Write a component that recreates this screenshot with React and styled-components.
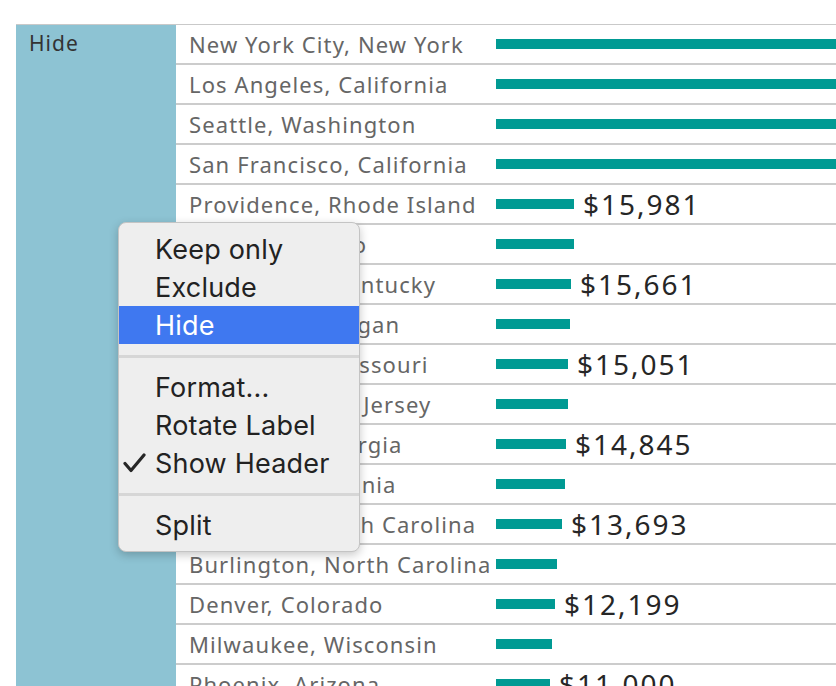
import React from "react";
import styled, { createGlobalStyle } from "styled-components";

const GlobalStyle = createGlobalStyle`
  html, body {
    margin: 0;
    padding: 0;
    background: #ffffff;
  }
`;

const rows = [
  { city: "New York City, New York", bar: 400 },
  { city: "Los Angeles, California", bar: 400 },
  { city: "Seattle, Washington", bar: 400 },
  { city: "San Francisco, California", bar: 400 },
  { city: "Providence, Rhode Island", bar: 78, value: "$15,981" },
  { city: "Cleveland, Ohio", bar: 78 },
  { city: "Owensboro, Kentucky", bar: 75, value: "$15,661" },
  { city: "Saginaw, Michigan", bar: 74 },
  { city: "Kansas City, Missouri", bar: 72, value: "$15,051" },
  { city: "Montclair, New Jersey", bar: 72 },
  { city: "Savannah, Georgia", bar: 70, value: "$14,845" },
  { city: "Arlington, Virginia", bar: 69 },
  { city: "Charlotte, North Carolina", bar: 66, value: "$13,693" },
  { city: "Burlington, North Carolina", bar: 61 },
  { city: "Denver, Colorado", bar: 59, value: "$12,199" },
  { city: "Milwaukee, Wisconsin", bar: 56 },
  { city: "Phoenix, Arizona", bar: 54, value: "$11,000" },
];

const menu = [
  { label: "Keep only" },
  { label: "Exclude" },
  { label: "Hide", active: true },
  { sep: true },
  { label: "Format..." },
  { label: "Rotate Label" },
  { label: "Show Header", checked: true },
  { sep: true },
  { label: "Split" },
];

export default function App() {
  return (
    <Page>
      <GlobalStyle />
      <Table>
        <HeaderCell>Hide</HeaderCell>
        <Rows>
          {rows.map((r) => (
            <Row key={r.city}>
              <Label>{r.city}</Label>
              <BarCell>
                <Bar style={{ width: r.bar }} />
                {r.value && <Value>{r.value}</Value>}
              </BarCell>
            </Row>
          ))}
        </Rows>
      </Table>

      <Menu>
        {menu.map((m, i) =>
          m.sep ? (
            <Separator key={i} />
          ) : (
            <MenuItem key={i} $active={m.active}>
              <Check>
                {m.checked && (
                  <svg width="23" height="20" viewBox="0 0 23 20">
                    <polyline
                      points="2,10.5 8,17.5 21,2"
                      fill="none"
                      stroke="#262626"
                      strokeWidth="3.2"
                      strokeLinecap="round"
                      strokeLinejoin="round"
                    />
                  </svg>
                )}
              </Check>
              {m.label}
            </MenuItem>
          )
        )}
      </Menu>
    </Page>
  );
}

const Page = styled.div`
  position: relative;
  width: 836px;
  height: 686px;
  overflow: hidden;
  padding: 24px 0 0 16px;
  box-sizing: border-box;
`;

const Table = styled.div`
  display: grid;
  grid-template-columns: 160px 1fr;
  border-top: 1px solid #c9c9c9;
`;

const HeaderCell = styled.div`
  background: #8dc3d3;
  color: #333333;
  font-family: "Noto Sans", sans-serif;
  font-size: 21px;
  letter-spacing: 1px;
  padding: 4px 0 0 13px;
`;

const Rows = styled.div`
  display: flex;
  flex-direction: column;
`;

const Row = styled.div`
  height: 40px;
  box-sizing: border-box;
  border-bottom: 2px solid #cccccc;
  display: grid;
  grid-template-columns: 320px 1fr;
  align-items: center;
`;

const Label = styled.div`
  padding-left: 13px;
  font-family: "Noto Sans", sans-serif;
  font-size: 22px;
  letter-spacing: 1.1px;
  color: #666666;
  white-space: nowrap;
  overflow: hidden;
`;

const BarCell = styled.div`
  display: flex;
  align-items: center;
  overflow: hidden;
`;

const Bar = styled.div`
  flex: none;
  height: 10px;
  background: #009a93;
`;

const Value = styled.span`
  margin-left: 9px;
  font-family: "Noto Sans", sans-serif;
  font-size: 28px;
  letter-spacing: 2px;
  color: #262626;
  white-space: nowrap;
`;

const Menu = styled.div`
  position: absolute;
  left: 118px;
  top: 222px;
  width: 242px;
  box-sizing: border-box;
  padding: 7px 0;
  background: #eeeeee;
  border: 1px solid #c4c4c4;
  border-radius: 8px;
  box-shadow: 0 3px 10px rgba(0, 0, 0, 0.22);
  font-family: "Inter", sans-serif;
`;

const MenuItem = styled.div`
  height: 38px;
  display: flex;
  align-items: center;
  font-size: 27px;
  letter-spacing: 0.2px;
  color: ${(p) => (p.$active ? "#ffffff" : "#222222")};
  background: ${(p) => (p.$active ? "#3f78f0" : "transparent")};
`;

const Check = styled.span`
  flex: none;
  width: 36px;
  box-sizing: border-box;
  padding-left: 4px;
  display: flex;
  align-items: center;
`;

const Separator = styled.div`
  height: 24px;
  display: flex;
  align-items: center;
  &::before {
    content: "";
    flex: 1;
    height: 3px;
    background: #d6d6d6;
  }
`;
